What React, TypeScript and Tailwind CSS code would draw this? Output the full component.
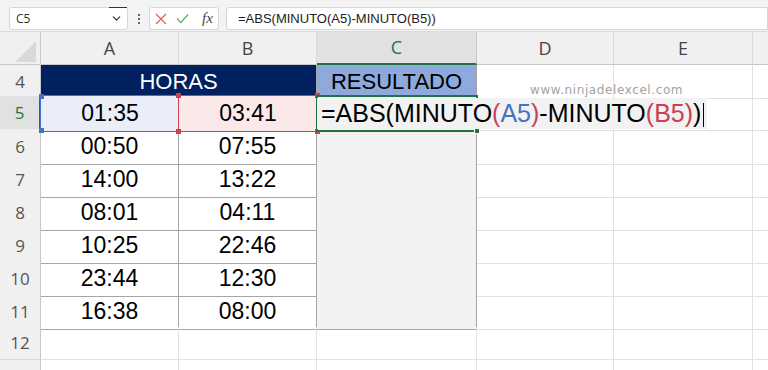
import { ChevronDown } from 'lucide-react';

const COLS = 'grid grid-cols-[41px_138px_138px_160px_137px_139px_1fr]';

const rows: [number, string, string][] = [
  [6, '00:50', '07:55'],
  [7, '14:00', '13:22'],
  [8, '08:01', '04:11'],
  [9, '10:25', '22:46'],
  [10, '23:44', '12:30'],
  [11, '16:38', '08:00'],
];

const RowHead = ({ n, active = false }: { n: number; active?: boolean }) => (
  <div
    className={`flex items-center justify-center border-b font-['Open_Sans',sans-serif] text-[17px] ${
      active
        ? 'bg-[#e1e1e1] text-[#217346] border-b-[#d4d4d4] border-r-2 border-r-[#217346]'
        : 'bg-[#f0f0f0] text-[#555] border-b-[#dadada] border-r border-r-[#c8c8c8]'
    }`}
  >
    {n}
  </div>
);

const Handle = ({ pos, color }: { pos: string; color: string }) => (
  <span className={`absolute w-[5px] h-[5px] ${pos} ${color}`} />
);

const App = () => {
  return (
    <div className="w-[768px] h-[370px] overflow-hidden bg-white font-['Liberation_Sans',Arial,sans-serif]">
      {/* formula bar */}
      <div className="h-[32px] bg-[#f3f3f3] flex items-start pt-[7px] pl-[9px] border-b border-[#dcdcdc]">
        <div className="relative w-[119px] h-[23px] bg-white border border-[#d6d6d6] rounded-[3px] flex items-center justify-between pl-[6px] pr-[4px]">
          <span className="text-[12px] text-[#333] font-['Open_Sans',sans-serif]">C5</span>
          <ChevronDown size={13} strokeWidth={2.2} className="text-[#333]" />
          <span className="absolute -top-px right-0 w-[18px] h-px bg-[#333]" />
        </div>
        <div className="w-[21px] h-[23px] flex flex-col items-center justify-center gap-[2px]">
          <span className="w-[2px] h-[2px] bg-[#666]" />
          <span className="w-[2px] h-[2px] bg-[#666]" />
          <span className="w-[2px] h-[2px] bg-[#666]" />
        </div>
        <div className="w-[70px] h-[23px] bg-white border border-[#d6d6d6] rounded-[3px] flex items-center pl-[5px] gap-[9px]">
          <svg width="12" height="12" viewBox="0 0 12 12">
            <path d="M1 1 L11 11 M11 1 L1 11" stroke="#e06464" strokeWidth="1.4" />
          </svg>
          <svg width="13" height="11" viewBox="0 0 13 11">
            <path d="M1 5.5 L4.8 9.5 L12 1.5" stroke="#5fb573" strokeWidth="1.4" fill="none" />
          </svg>
          <span className="font-['Liberation_Serif',serif] italic text-[15px] text-[#444] leading-none ml-[4px]">
            fx
          </span>
        </div>
        <div className="flex-1 ml-[7px] h-[23px] bg-white border border-[#d6d6d6] rounded-l-[3px] flex items-center pl-[11px]">
          <span className="text-[13px] text-[#222]">=ABS(MINUTO(A5)-MINUTO(B5))</span>
        </div>
      </div>

      {/* column headers */}
      <div className={`${COLS} h-[33px] bg-[#f0f0f0] font-['Open_Sans',sans-serif] text-[18px] text-[#444]`}>
        <div className="relative border-r border-b border-[#c8c8c8]">
          <svg className="absolute right-[4px] bottom-[2px]" width="21" height="21" viewBox="0 0 21 21">
            <path d="M21 0 L21 21 L0 21 Z" fill="#d9d9d9" />
          </svg>
        </div>
        <div className="flex items-center justify-center border-r border-r-[#dadada] border-b border-b-[#c8c8c8]">A</div>
        <div className="flex items-center justify-center border-r border-r-[#dadada] border-b border-b-[#c8c8c8]">B</div>
        <div className="flex items-center justify-center bg-[#e1e1e1] text-[#217346] border-r border-r-[#c8c8c8] border-b-2 border-b-[#217346]">
          C
        </div>
        <div className="flex items-center justify-center border-r border-r-[#dadada] border-b border-b-[#c8c8c8]">D</div>
        <div className="flex items-center justify-center border-r border-r-[#dadada] border-b border-b-[#c8c8c8]">E</div>
        <div className="border-b border-b-[#c8c8c8]" />
      </div>

      <div className="relative">
        {/* row 4 */}
        <div className={`${COLS} h-[31px] text-[22px]`}>
          <RowHead n={4} />
          <div className="col-span-2 flex items-center justify-center bg-[#002060] text-white border-r border-b border-[#a6a6a6]">
            HORAS
          </div>
          <div className="flex items-center justify-center bg-[#8ea9db] text-black border-r border-b border-[#a6a6a6]">
            RESULTADO
          </div>
          <div className="border-r border-b border-[#e1e1e1]" />
          <div className="border-r border-b border-[#e1e1e1]" />
          <div className="border-b border-[#e1e1e1]" />
        </div>

        {/* row 5 */}
        <div className={`${COLS} h-[33px] text-[23px]`}>
          <RowHead n={5} active />
          <div className="relative flex items-center justify-center bg-[#e9eef8] text-black">
            <span className="absolute -inset-px border border-[#4472c4]" />
            <Handle pos="-left-[2px] -top-[2px]" color="bg-[#4472c4]" />
            <Handle pos="-left-[2px] -bottom-[2px]" color="bg-[#4472c4]" />
            01:35
          </div>
          <div className="relative flex items-center justify-center bg-[#fbe9e9] text-black">
            <span className="absolute -inset-px border border-[#c9404f]" />
            <Handle pos="-left-[3px] -top-[3px]" color="bg-[#c9404f]" />
            <Handle pos="-left-[3px] -bottom-[3px]" color="bg-[#c9404f]" />
            <Handle pos="-right-[3px] -top-[3px]" color="bg-[#c9404f]" />
            <Handle pos="-right-[3px] -bottom-[3px]" color="bg-[#c9404f]" />
            03:41
          </div>
          <div className="relative z-10 flex items-center bg-[#f2f2f2]">
            <span className="absolute -inset-px border-2 border-[#217346]" />
            <span className="absolute right-[-3px] bottom-[-3px] w-[6px] h-[6px] bg-[#217346] border border-white" />
            <span className="relative whitespace-nowrap bg-[#f2f2f2] pl-[4px] pr-[3px] text-[25px] leading-[31px] text-black">
              =ABS(MINUTO<span className="text-[#c8415a]">(</span>
              <span className="text-[#4472c4]">A5</span>
              <span className="text-[#c8415a]">)</span>-MINUTO<span className="text-[#c9404f]">(B5)</span>)
              <span className="inline-block w-px h-[24px] bg-black align-middle ml-[2px]" />
            </span>
          </div>
          <div className="border-r border-b border-[#e1e1e1]" />
          <div className="border-r border-b border-[#e1e1e1]" />
          <div className="border-b border-[#e1e1e1]" />
        </div>

        {rows.map(([n, a, b]) => (
          <div key={n} className={`${COLS} h-[33px] text-[23px] text-black`}>
            <RowHead n={n} />
            <div className="flex items-center justify-center border-r border-b border-[#a6a6a6]">{a}</div>
            <div className="flex items-center justify-center border-r border-b border-[#a6a6a6]">{b}</div>
            <div className="bg-[#f2f2f2] border-r border-b border-[#a6a6a6]" />
            <div className="border-r border-b border-[#e1e1e1]" />
            <div className="border-r border-b border-[#e1e1e1]" />
            <div className="border-b border-[#e1e1e1]" />
          </div>
        ))}

        {[12, 13].map((n) => (
          <div key={n} className={`${COLS} h-[33px]`}>
            <RowHead n={n} />
            <div className="border-r border-b border-[#e1e1e1]" />
            <div className="border-r border-b border-[#e1e1e1]" />
            <div className="border-r border-b border-[#e1e1e1]" />
            <div className="border-r border-b border-[#e1e1e1]" />
            <div className="border-r border-b border-[#e1e1e1]" />
            <div className="border-b border-[#e1e1e1]" />
          </div>
        ))}

        <span className="absolute left-[530px] top-[16px] text-[12px] tracking-[0.6px] text-[#a3a3a3] font-['DejaVu_Sans',sans-serif]">
          www.ninjadelexcel.com
        </span>
      </div>
    </div>
  );
};

export default App;
